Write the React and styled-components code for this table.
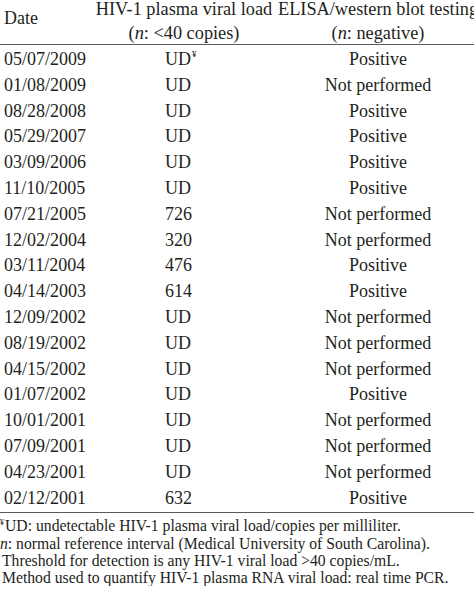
import React from "react";
import styled, { createGlobalStyle } from "styled-components";

const Global = createGlobalStyle`
  html, body { margin: 0; padding: 0; background: #fff; }
  body { font-family: "Liberation Serif", "Times New Roman", serif; color: #231f20; }
`;

const Page = styled.div`
  width: 474px;
  overflow: hidden;
`;

const Grid = styled.div`
  display: grid;
  grid-template-columns: 92px 190px 192px;
`;

const Head = styled(Grid)`
  height: 44px;
  border-bottom: 1.5px solid #5a5a5a;
  font-size: 18.3px;
`;

const HeadCell = styled.div`
  min-width: 0;
  display: flex;
  flex-direction: column;
  align-items: ${(p) => (p.$left ? "flex-start" : "center")};
  padding-top: ${(p) => (p.$left ? "9px" : "0")};
  padding-left: ${(p) => p.$padL || 0}px;
  padding-right: ${(p) => p.$padR || 0}px;
  font-size: ${(p) => (p.$left ? "18px" : "inherit")};
  gap: 6px;
  white-space: nowrap;
  line-height: 18px;
`;

const Body = styled.div`
  padding: 2px 0 1px;
  border-bottom: 1.5px solid #5a5a5a;
`;

const Row = styled(Grid)`
  height: 25.8px;
  align-items: center;
  font-size: 18px;
  line-height: 25.8px;
`;

const Cell = styled.div`
  display: flex;
  justify-content: ${(p) => p.$align || "flex-start"};
  padding-left: ${(p) => p.$pad || 0}px;
  white-space: nowrap;
`;

const Sup = styled.sup`
  font-size: 9px;
  line-height: 0;
  vertical-align: 8px;
  margin-left: 1px;
`;

const Notes = styled.div`
  padding-top: 4px;
  font-size: 15.7px;
  line-height: 17.2px;
`;

const Note = styled.div`
  white-space: nowrap;
  padding-left: ${(p) => p.$pad || 0}px;
`;

const NoteSup = styled.sup`
  font-size: 8px;
  line-height: 0;
  vertical-align: 6px;
  margin-right: 1px;
`;

const rows = [
  ["05/07/2009", "UD", "Positive", true],
  ["01/08/2009", "UD", "Not performed"],
  ["08/28/2008", "UD", "Positive"],
  ["05/29/2007", "UD", "Positive"],
  ["03/09/2006", "UD", "Positive"],
  ["11/10/2005", "UD", "Positive"],
  ["07/21/2005", "726", "Not performed"],
  ["12/02/2004", "320", "Not performed"],
  ["03/11/2004", "476", "Positive"],
  ["04/14/2003", "614", "Positive"],
  ["12/09/2002", "UD", "Not performed"],
  ["08/19/2002", "UD", "Not performed"],
  ["04/15/2002", "UD", "Not performed"],
  ["01/07/2002", "UD", "Positive"],
  ["10/01/2001", "UD", "Not performed"],
  ["07/09/2001", "UD", "Not performed"],
  ["04/23/2001", "UD", "Not performed"],
  ["02/12/2001", "632", "Positive"],
];

export default function App() {
  return (
    <Page>
      <Global />
      <Head>
        <HeadCell $left $padL={4}>
          <span>Date</span>
        </HeadCell>
        <HeadCell $padR={6}>
          <span>HIV-1 plasma viral load</span>
          <span>
            (<i>n</i>: &lt;40 copies)
          </span>
        </HeadCell>
        <HeadCell>
          <span>ELISA/western blot testing</span>
          <span>
            (<i>n</i>: negative)
          </span>
        </HeadCell>
      </Head>
      <Body>
        {rows.map(([d, v, e, s]) => (
          <Row key={d}>
            <Cell $pad={4}>{d}</Cell>
            <Cell $pad={73}>
              <span>
                {v}
                {s && <Sup>¥</Sup>}
              </span>
            </Cell>
            <Cell $align="center">{e}</Cell>
          </Row>
        ))}
      </Body>
      <Notes>
        <Note>
          <NoteSup>¥</NoteSup>UD: undetectable HIV-1 plasma viral load/copies per milliliter.
        </Note>
        <Note>
          <i>n</i>: normal reference interval (Medical University of South Carolina).
        </Note>
        <Note $pad={2}>Threshold for detection is any HIV-1 viral load &gt;40 copies/mL.</Note>
        <Note $pad={2}>Method used to quantify HIV-1 plasma RNA viral load: real time PCR.</Note>
      </Notes>
    </Page>
  );
}
